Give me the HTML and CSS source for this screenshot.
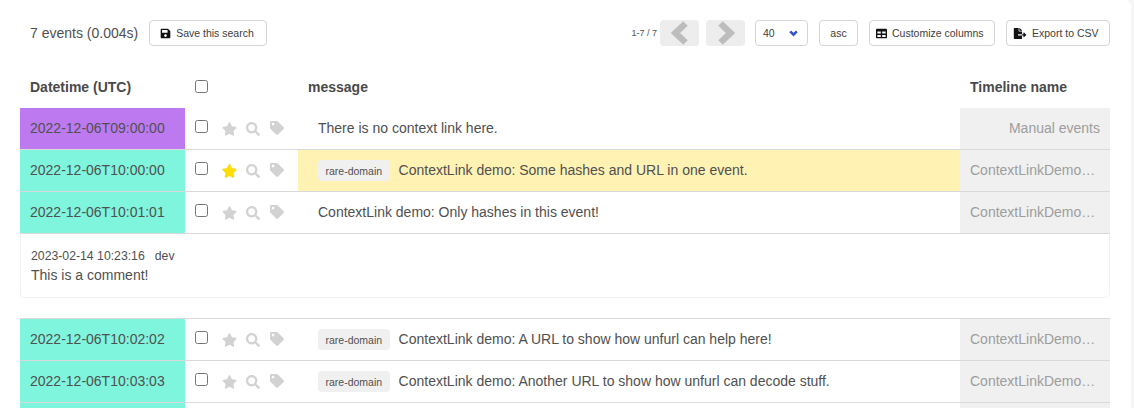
FILE: index.html
```html
<!DOCTYPE html>
<html lang="en">
<head>
<meta charset="utf-8">
<title>Timesketch explore</title>
<link rel="stylesheet" href="styles.css">
</head>
<body>
<svg class="defs" width="0" height="0" aria-hidden="true">
  <symbol id="i-star" viewBox="0 0 576 512"><path d="M259.3 17.8L194 150.2 47.9 171.5c-26.2 3.8-36.7 36.1-17.7 54.6l105.7 103-25 145.5c-4.5 26.3 23.2 46 46.4 33.7L288 439.6l130.7 68.7c23.2 12.2 50.9-7.4 46.4-33.7l-25-145.5 105.7-103c19-18.5 8.5-50.8-17.7-54.6L382 150.2 316.7 17.8c-11.7-23.6-45.6-23.9-57.4 0z"/></symbol>
  <symbol id="i-search" viewBox="0 0 512 512"><path d="M505 442.7L405.3 343c-4.5-4.5-10.6-7-17-7H372c27.6-35.3 44-79.7 44-128C416 93.1 322.9 0 208 0S0 93.1 0 208s93.1 208 208 208c48.3 0 92.7-16.4 128-44v16.3c0 6.4 2.5 12.5 7 17l99.7 99.7c9.4 9.4 24.6 9.4 33.9 0l28.3-28.3c9.4-9.4 9.4-24.6.1-34zM208 336c-70.7 0-128-57.2-128-128 0-70.7 57.2-128 128-128 70.7 0 128 57.2 128 128 0 70.7-57.2 128-128 128z"/></symbol>
  <symbol id="i-tag" viewBox="0 0 512 512"><path d="M0 252.118V48C0 21.49 21.49 0 48 0h204.118a48 48 0 0 1 33.941 14.059l211.882 211.882c18.745 18.745 18.745 49.137 0 67.882L293.823 497.941c-18.745 18.745-49.137 18.745-67.882 0L14.059 286.059A48 48 0 0 1 0 252.118zM112 64c-26.51 0-48 21.49-48 48s21.49 48 48 48 48-21.49 48-48-21.49-48-48-48z"/></symbol>
  <symbol id="i-save" viewBox="0 0 448 512"><path d="M433.941 129.941l-83.882-83.882A48 48 0 0 0 316.118 32H48C21.49 32 0 53.49 0 80v352c0 26.51 21.49 48 48 48h352c26.51 0 48-21.49 48-48V163.882a48 48 0 0 0-14.059-33.941zM224 416c-35.346 0-64-28.654-64-64 0-35.346 28.654-64 64-64s64 28.654 64 64c0 35.346-28.654 64-64 64zm96-304.52V212c0 6.627-5.373 12-12 12H76c-6.627 0-12-5.373-12-12V108c0-6.627 5.373-12 12-12h228.52c3.183 0 6.235 1.264 8.485 3.515l3.48 3.48A11.996 11.996 0 0 1 320 111.48z"/></symbol>
  <symbol id="i-table" viewBox="0 0 512 512"><path d="M464 32H48C21.49 32 0 53.49 0 80v352c0 26.51 21.49 48 48 48h416c26.51 0 48-21.49 48-48V80c0-26.51-21.49-48-48-48zM224 416H64v-96h160v96zm0-160H64v-96h160v96zm224 160H288v-96h160v96zm0-160H288v-96h160v96z"/></symbol>
  <symbol id="i-export" viewBox="0 0 576 512"><path d="M384 121.9c0-6.3-2.5-12.4-7-16.9L279.1 7c-4.5-4.5-10.6-7-17-7H256v128h128v-6.1zM571 308l-95.7-96.4c-10.1-10.1-27.4-3-27.4 11.3V288h-64v64h64v65.2c0 14.3 17.3 21.4 27.4 11.3L571 332c6.6-6.6 6.6-17.4 0-24zm-379 28v-32c0-8.8 7.2-16 16-16h176V160H248c-13.2 0-24-10.8-24-24V0H24C10.7 0 0 10.7 0 24v464c0 13.3 10.7 24 24 24h336c13.3 0 24-10.7 24-24V352H208c-8.8 0-16-7.2-16-16z"/></symbol>
  <symbol id="i-left" viewBox="0 0 18 26"><polyline points="14.5,3.5 4.5,13 14.5,22.5"/></symbol>
  <symbol id="i-right" viewBox="0 0 18 26"><polyline points="3.5,3.5 13.5,13 3.5,22.5"/></symbol>
  <symbol id="i-down" viewBox="0 0 9 7"><polyline points="1.2,1.4 4.5,4.6 7.8,1.4"/></symbol>
</svg>

<main class="panel">
  <div class="toolbar">
    <span class="count">7 events (0.004s)</span>
    <button class="btn btn-save" type="button"><svg class="btn-icon"><use href="#i-save"/></svg>Save this search</button>
    <span class="spacer"></span>
    <span class="range">1-7 / 7</span>
    <span class="page"><svg class="chev"><use href="#i-left"/></svg></span>
    <span class="page"><svg class="chev"><use href="#i-right"/></svg></span>
    <span class="btn select">40<svg class="select-arrow"><use href="#i-down"/></svg></span>
    <button class="btn btn-asc" type="button">asc</button>
    <button class="btn btn-cols" type="button"><svg class="btn-icon"><use href="#i-table"/></svg>Customize columns</button>
    <button class="btn btn-csv" type="button"><svg class="btn-icon btn-icon-wide"><use href="#i-export"/></svg>Export to CSV</button>
  </div>

  <div class="head">
    <div class="col-date head-date">Datetime (UTC)</div>
    <div class="col-actions"><input class="check" type="checkbox"></div>
    <div class="col-msg head-msg">message</div>
    <div class="col-name head-name">Timeline name</div>
  </div>

  <div class="row">
    <div class="col-date date purple">2022-12-06T09:00:00</div>
    <div class="col-actions">
      <input class="check" type="checkbox">
      <svg class="ic ic-star"><use href="#i-star"/></svg><svg class="ic ic-search"><use href="#i-search"/></svg><svg class="ic ic-tag"><use href="#i-tag"/></svg>
    </div>
    <div class="col-msg msg">There is no context link here.</div>
    <div class="col-name name name-right">Manual events</div>
  </div>

  <div class="row">
    <div class="col-date date teal">2022-12-06T10:00:00</div>
    <div class="col-actions">
      <input class="check" type="checkbox">
      <svg class="ic ic-star starred"><use href="#i-star"/></svg><svg class="ic ic-search"><use href="#i-search"/></svg><svg class="ic ic-tag"><use href="#i-tag"/></svg>
    </div>
    <div class="col-msg msg highlight"><span class="chip">rare-domain</span>ContextLink demo: Some hashes and URL in one event.</div>
    <div class="col-name name">ContextLinkDemo…</div>
  </div>

  <div class="row">
    <div class="col-date date teal">2022-12-06T10:01:01</div>
    <div class="col-actions">
      <input class="check" type="checkbox">
      <svg class="ic ic-star"><use href="#i-star"/></svg><svg class="ic ic-search"><use href="#i-search"/></svg><svg class="ic ic-tag"><use href="#i-tag"/></svg>
    </div>
    <div class="col-msg msg">ContextLink demo: Only hashes in this event!</div>
    <div class="col-name name">ContextLinkDemo…</div>
  </div>

  <div class="comment">
    <div class="comment-meta"><span>2023-02-14 10:23:16</span><span>dev</span></div>
    <div class="comment-text">This is a comment!</div>
  </div>

  <div class="row row-first">
    <div class="col-date date teal">2022-12-06T10:02:02</div>
    <div class="col-actions">
      <input class="check" type="checkbox">
      <svg class="ic ic-star"><use href="#i-star"/></svg><svg class="ic ic-search"><use href="#i-search"/></svg><svg class="ic ic-tag"><use href="#i-tag"/></svg>
    </div>
    <div class="col-msg msg"><span class="chip">rare-domain</span>ContextLink demo: A URL to show how unfurl can help here!</div>
    <div class="col-name name">ContextLinkDemo…</div>
  </div>

  <div class="row">
    <div class="col-date date teal">2022-12-06T10:03:03</div>
    <div class="col-actions">
      <input class="check" type="checkbox">
      <svg class="ic ic-star"><use href="#i-star"/></svg><svg class="ic ic-search"><use href="#i-search"/></svg><svg class="ic ic-tag"><use href="#i-tag"/></svg>
    </div>
    <div class="col-msg msg"><span class="chip">rare-domain</span>ContextLink demo: Another URL to show how unfurl can decode stuff.</div>
    <div class="col-name name">ContextLinkDemo…</div>
  </div>

  <div class="row">
    <div class="col-date date teal"></div>
    <div class="col-actions"></div>
    <div class="col-msg msg"></div>
    <div class="col-name name"></div>
  </div>
</main>
</body>
</html>
```
FILE: styles.css
```css
* { box-sizing: border-box; }
html, body { height: 100%; }
body {
  margin: 0;
  height: 408px;
  overflow: hidden;
  background: #f5f5f5;
  font-family: "Liberation Sans", Arial, sans-serif;
  font-size: 14px;
  color: #505050;
}
.defs { position: absolute; }
.panel {
  width: 1131px;
  height: 408px;
  padding: 0 21px 0 20px;
  background: #fff;
  border-top-right-radius: 6px;
  overflow: hidden;
}
.toolbar {
  display: flex;
  align-items: center;
  height: 26px;
  margin-top: 20px;
}
.count { margin-left: 10px; margin-right: 11px; font-size: 14px; }
.spacer { flex: 1; }
.btn {
  display: inline-flex;
  align-items: center;
  height: 26px;
  padding: 0;
  border: 1px solid #d5d5d5;
  border-radius: 4px;
  background: #fff;
  font: 10.5px "Liberation Sans", Arial, sans-serif;
  color: #404040;
  white-space: nowrap;
}
.btn-icon { flex: none; width: 11px; height: 11px; margin-right: 5px; fill: #111; }
.btn-icon-wide { width: 14px; }
.btn-save { width: 118px; padding-left: 10px; }
.range { font-size: 9px; color: #505050; margin-right: 3px; }
.page {
  display: flex;
  align-items: center;
  justify-content: center;
  width: 39px;
  height: 26px;
  margin-right: 7px;
  border-radius: 4px;
  background: #ededed;
}
.page + .page { margin-right: 10px; }
.chev { flex: none; width: 18px; height: 26px; fill: none; stroke: #bdbdbd; stroke-width: 6.5; }
.select { width: 53px; padding-left: 7px; }
.select-arrow { flex: none; width: 9px; height: 7px; margin-left: 14px; fill: none; stroke: #3850c8; stroke-width: 2.6; }
.btn-asc { width: 39px; margin-left: 11px; justify-content: center; }
.btn-cols { width: 126px; margin-left: 11px; padding-left: 6px; }
.btn-csv { width: 104px; margin-left: 11px; padding-left: 6px; }
.head { display: flex; align-items: center; height: 36px; margin-top: 26px; padding-bottom: 6px; color: #4a4a4a; }
.head > div { font-weight: 700; }
.head-date { padding-left: 10px; }
.head-msg { padding-left: 10px; }
.head-name { padding-left: 10px; }
.col-date { flex: 0 0 165px; }
.col-actions { flex: 0 0 113px; display: flex; align-items: center; padding-left: 10px; }
.col-msg { flex: 0 0 662px; }
.col-name { flex: 0 0 150px; }
.check { width: 13px; height: 13px; margin: 0 0 2px; flex: none; }
.row { display: flex; height: 42px; border-bottom: 1px solid #d9d9d9; }
.row-first { height: 43px; border-top: 1px solid #d9d9d9; }
.date { display: flex; align-items: center; padding-left: 10px; padding-bottom: 2px; }
.purple { background: #bd7af0; }
.teal { background: #7ef5dc; }
.row > .col-actions { margin-top: -2px; }
.ic { flex: none; width: 15px; height: 14px; fill: #d2d2d2; }
.ic-star { margin-left: 14px; margin-top: 3px; }
.ic-search { width: 14px; margin-left: 9px; margin-top: 3px; }
.ic-tag { width: 14px; margin-left: 10px; margin-top: 0; }
.starred { fill: #ffdd00; stroke: #e8c800; stroke-width: 8; }
.msg { display: flex; align-items: center; padding-left: 20px; padding-bottom: 2px; }
.highlight { background: #fff2b3; }
.chip {
  display: inline-flex;
  align-items: center;
  height: 21px;
  margin-top: 2px;
  margin-right: 9px;
  padding: 0 7.5px;
  border-radius: 4px;
  background: #f0f0f0;
  font-size: 10.5px;
}
.name {
  display: flex;
  align-items: center;
  padding-left: 10px;
  padding-bottom: 2px;
  background: #f0f0f0;
  color: #9d9d9d;
}
.name-right { justify-content: flex-end; padding-right: 10px; }
.comment {
  height: 64px;
  margin-bottom: 20px;
  padding: 15px 10px 0;
  border: 1px solid #f2f2f2;
  border-top: 0;
  border-radius: 0 0 5px 5px;
}
.comment-meta { display: flex; gap: 10px; font-size: 12.25px; line-height: 14px; }
.comment-text { margin-top: 3px; line-height: 18px; }
```
